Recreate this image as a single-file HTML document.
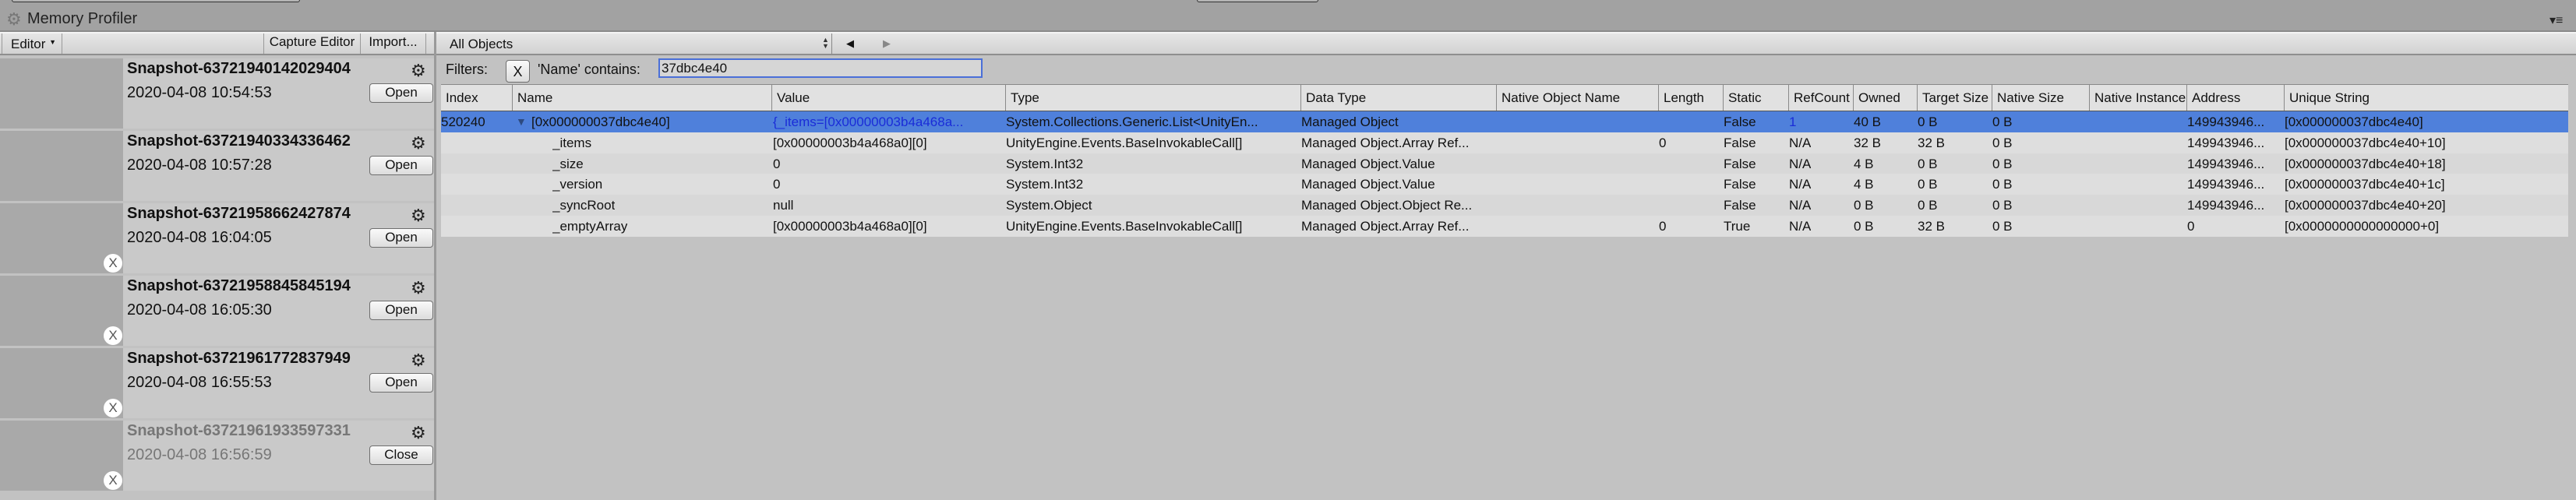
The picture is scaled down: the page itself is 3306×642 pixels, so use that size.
<!DOCTYPE html>
<html><head><meta charset="utf-8"><style>
*{margin:0;padding:0;box-sizing:border-box}
body{width:3306px;height:642px;background:#c2c2c2;font-family:"Liberation Sans",sans-serif;position:relative;overflow:hidden;color:#111}
.a{position:absolute;white-space:nowrap}
.btn{position:absolute;border:1px solid #6f6f6f;border-radius:4px;background:linear-gradient(#fafafa,#dcdcdc);font-size:17px;text-align:center;line-height:22px;color:#111}
.tb{background:linear-gradient(#e6e6e6,#d2d2d2);border-top:2px solid #f4f4f4;border-bottom:2px solid #8e8e8e}
.snap{position:absolute;left:0;width:557px;height:90px;background:#c9c9c9}
.thumb{position:absolute;left:0;top:0;width:158px;height:90px;background:#a9a9a9}
.nm{position:absolute;left:163px;top:2px;font-size:20px;font-weight:bold}
.dt{position:absolute;left:163px;top:33px;font-size:20px}
.gear{position:absolute;left:527px;top:3px;font-size:22px;color:#222}
.xc{position:absolute;left:133px;top:65px;width:24px;height:24px;border-radius:12px;background:#fff;color:#555;font-size:17px;text-align:center;line-height:24px}
.th{position:absolute;top:109px;height:33px;border-right:1px solid #8a8a8a;font-size:17px;line-height:33px;padding-left:6px;overflow:hidden;background:#e1e1e1}
.row{position:absolute;left:566px;width:2730px;height:27px;font-size:17px;line-height:27px}
.row span{position:absolute;white-space:nowrap;overflow:hidden}
</style></head><body>
<!-- top strip -->
<div class="a" style="left:0;top:0;width:3306px;height:41px;background:#a2a2a2;border-bottom:2px solid #8a8a8a"></div>
<div class="a" style="left:15px;top:-10px;width:370px;height:13px;border:1px solid #333;border-radius:3px;background:#b5b5b5"></div>
<div class="a" style="left:1536px;top:-10px;width:156px;height:13px;border:1px solid #333;border-radius:3px;background:#b5b5b5"></div>
<div class="a" style="left:8px;top:12px;font-size:22px;color:#777">⚙</div>
<div class="a" style="left:35px;top:13px;font-size:20px;color:#222">Memory Profiler</div>
<div class="a" style="left:3272px;top:16px;font-size:16px;color:#222">▾≡</div>
<!-- toolbar -->
<div class="a tb" style="left:0;top:41px;width:3306px;height:30px"></div>
<div class="a" style="left:2px;top:43px;width:78px;height:26px;border-right:1px solid #9a9a9a;border-left:1px solid #9a9a9a"></div>
<div class="a" style="left:14px;top:47px;font-size:17px">Editor <span style="font-size:9px;vertical-align:5px">▼</span></div>
<div class="a" style="left:338px;top:43px;width:125px;height:26px;border-left:1px solid #9a9a9a;border-right:1px solid #9a9a9a;font-size:17px;line-height:22px;text-align:center">Capture Editor</div>
<div class="a" style="left:463px;top:43px;width:84px;height:26px;border-right:1px solid #9a9a9a;font-size:17px;line-height:22px;text-align:center">Import...</div>
<div class="a" style="left:557px;top:41px;width:3px;height:601px;background:#9a9a9a"></div>
<div class="a" style="left:577px;top:47px;font-size:17px">All Objects</div>
<div class="a" style="left:1055px;top:47px;font-size:9px;line-height:8px;color:#333">▲<br>▼</div>
<div class="a" style="left:1067px;top:43px;width:1px;height:26px;background:#888"></div>
<div class="a" style="left:1086px;top:48px;font-size:13px;color:#111">◀</div>
<div class="a" style="left:1133px;top:48px;font-size:13px;color:#888">▶</div>
<!-- snapshots -->
<div class="snap" style="top:75px"><div class="thumb"></div><div class="nm">Snapshot-63721940142029404</div><div class="dt">2020-04-08 10:54:53</div><div class="gear">⚙</div><div class="btn" style="left:474px;top:32px;width:82px;height:25px">Open</div></div>
<div class="snap" style="top:168px"><div class="thumb"></div><div class="nm">Snapshot-63721940334336462</div><div class="dt">2020-04-08 10:57:28</div><div class="gear">⚙</div><div class="btn" style="left:474px;top:32px;width:82px;height:25px">Open</div></div>
<div class="snap" style="top:261px"><div class="thumb"></div><div class="xc">X</div><div class="nm">Snapshot-63721958662427874</div><div class="dt">2020-04-08 16:04:05</div><div class="gear">⚙</div><div class="btn" style="left:474px;top:32px;width:82px;height:25px">Open</div></div>
<div class="snap" style="top:354px"><div class="thumb"></div><div class="xc">X</div><div class="nm">Snapshot-63721958845845194</div><div class="dt">2020-04-08 16:05:30</div><div class="gear">⚙</div><div class="btn" style="left:474px;top:32px;width:82px;height:25px">Open</div></div>
<div class="snap" style="top:447px"><div class="thumb"></div><div class="xc">X</div><div class="nm">Snapshot-63721961772837949</div><div class="dt">2020-04-08 16:55:53</div><div class="gear">⚙</div><div class="btn" style="left:474px;top:32px;width:82px;height:25px">Open</div></div>
<div class="snap" style="top:540px"><div class="thumb"></div><div class="xc">X</div><div class="nm" style="color:#777">Snapshot-63721961933597331</div><div class="dt" style="color:#777">2020-04-08 16:56:59</div><div class="gear">⚙</div><div class="btn" style="left:474px;top:32px;width:82px;height:25px">Close</div></div>
<!-- filters -->
<div class="a" style="left:572px;top:79px;font-size:18px">Filters:</div>
<div class="btn" style="left:649px;top:77px;width:31px;height:29px;line-height:28px;font-size:18px">X</div>
<div class="a" style="left:690px;top:79px;font-size:18px">'Name' contains:</div>
<div class="a" style="left:845px;top:75px;width:416px;height:25px;background:#d6d6d6;border:2px solid #4a6fd8;font-size:17px;line-height:21px;padding-left:2px">37dbc4e40</div>
<!-- table -->
<div class="a" style="left:566px;top:108px;width:2730px;height:35px;background:#e1e1e1;border-top:1px solid #888;border-bottom:2px solid #555"></div>
<div class="th" style="left:566px;width:92px">Index</div>
<div class="th" style="left:658px;width:333px">Name</div>
<div class="th" style="left:991px;width:300px">Value</div>
<div class="th" style="left:1291px;width:379px">Type</div>
<div class="th" style="left:1670px;width:251px">Data Type</div>
<div class="th" style="left:1921px;width:208px">Native Object Name</div>
<div class="th" style="left:2129px;width:83px">Length</div>
<div class="th" style="left:2212px;width:84px">Static</div>
<div class="th" style="left:2296px;width:83px">RefCount</div>
<div class="th" style="left:2379px;width:82px">Owned Size</div>
<div class="th" style="left:2461px;width:96px">Target Size</div>
<div class="th" style="left:2557px;width:125px">Native Size</div>
<div class="th" style="left:2682px;width:125px">Native Instance</div>
<div class="th" style="left:2807px;width:125px">Address</div>
<div class="th" style="left:2932px;width:364px;border-right:none">Unique String</div>

<div class="row" style="top:143px;background:#4f80db">
<span style="left:0">520240</span><span style="left:96px;font-size:14px;color:#2d4a80">▼</span><span style="left:116px">[0x000000037dbc4e40]</span>
<span style="left:426px;width:296px;color:#1a2cd8">{_items=[0x00000003b4a468a...</span><span style="left:725px;width:375px">System.Collections.Generic.List&lt;UnityEn...</span><span style="left:1104px">Managed Object</span>
<span style="left:1646px">False</span><span style="left:1730px;color:#1a2cd8">1</span><span style="left:1813px">40 B</span><span style="left:1895px">0 B</span><span style="left:1991px">0 B</span><span style="left:2241px">149943946...</span><span style="left:2366px">[0x000000037dbc4e40]</span></div>

<div class="row" style="top:170px;background:#dedede">
<span style="left:143px">_items</span><span style="left:426px">[0x00000003b4a468a0][0]</span><span style="left:725px">UnityEngine.Events.BaseInvokableCall[]</span><span style="left:1104px">Managed Object.Array Ref...</span>
<span style="left:1563px">0</span><span style="left:1646px">False</span><span style="left:1730px">N/A</span><span style="left:1813px">32 B</span><span style="left:1895px">32 B</span><span style="left:1991px">0 B</span><span style="left:2241px">149943946...</span><span style="left:2366px">[0x000000037dbc4e40+10]</span></div>

<div class="row" style="top:197px;background:#d8d8d8">
<span style="left:143px">_size</span><span style="left:426px">0</span><span style="left:725px">System.Int32</span><span style="left:1104px">Managed Object.Value</span>
<span style="left:1646px">False</span><span style="left:1730px">N/A</span><span style="left:1813px">4 B</span><span style="left:1895px">0 B</span><span style="left:1991px">0 B</span><span style="left:2241px">149943946...</span><span style="left:2366px">[0x000000037dbc4e40+18]</span></div>

<div class="row" style="top:223px;background:#dedede">
<span style="left:143px">_version</span><span style="left:426px">0</span><span style="left:725px">System.Int32</span><span style="left:1104px">Managed Object.Value</span>
<span style="left:1646px">False</span><span style="left:1730px">N/A</span><span style="left:1813px">4 B</span><span style="left:1895px">0 B</span><span style="left:1991px">0 B</span><span style="left:2241px">149943946...</span><span style="left:2366px">[0x000000037dbc4e40+1c]</span></div>

<div class="row" style="top:250px;background:#d8d8d8">
<span style="left:143px">_syncRoot</span><span style="left:426px">null</span><span style="left:725px">System.Object</span><span style="left:1104px">Managed Object.Object Re...</span>
<span style="left:1646px">False</span><span style="left:1730px">N/A</span><span style="left:1813px">0 B</span><span style="left:1895px">0 B</span><span style="left:1991px">0 B</span><span style="left:2241px">149943946...</span><span style="left:2366px">[0x000000037dbc4e40+20]</span></div>

<div class="row" style="top:277px;background:#dedede">
<span style="left:143px">_emptyArray</span><span style="left:426px">[0x00000003b4a468a0][0]</span><span style="left:725px">UnityEngine.Events.BaseInvokableCall[]</span><span style="left:1104px">Managed Object.Array Ref...</span>
<span style="left:1563px">0</span><span style="left:1646px">True</span><span style="left:1730px">N/A</span><span style="left:1813px">0 B</span><span style="left:1895px">32 B</span><span style="left:1991px">0 B</span><span style="left:2241px">0</span><span style="left:2366px">[0x0000000000000000+0]</span></div>
</body></html>
